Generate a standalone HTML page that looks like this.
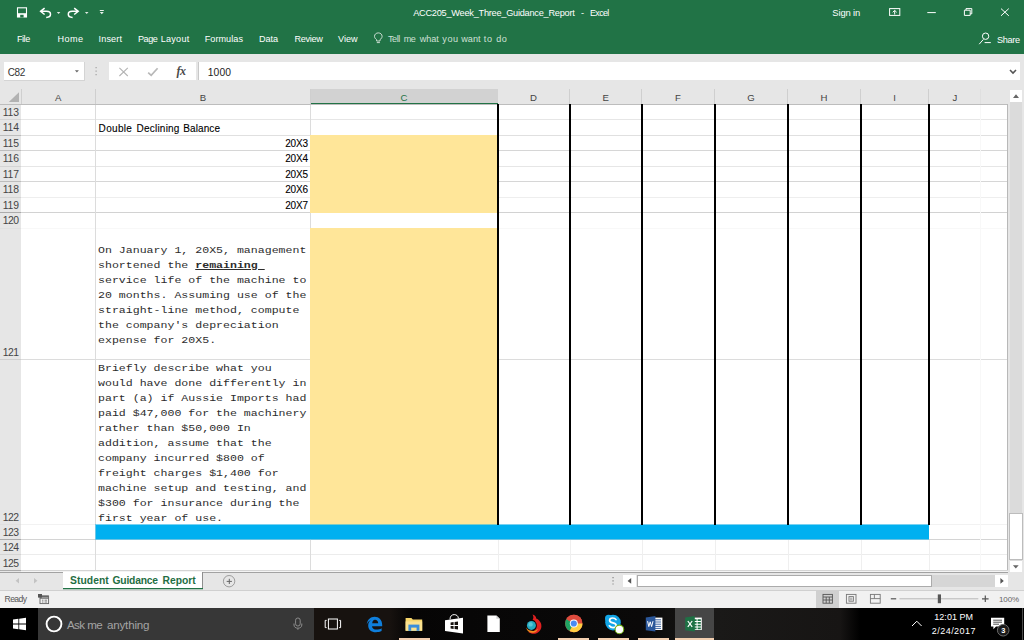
<!DOCTYPE html>
<html>
<head>
<meta charset="utf-8">
<title>ACC205_Week_Three_Guidance_Report - Excel</title>
<style>
html,body{margin:0;padding:0;}
body{width:1024px;height:640px;overflow:hidden;position:relative;background:#fff;font-family:"Liberation Sans",sans-serif;}
.a{position:absolute;}
.t{position:absolute;white-space:nowrap;line-height:20px;}
svg{position:absolute;overflow:visible;}
.mono{position:absolute;font-family:"Liberation Mono",monospace;white-space:pre;}
</style>
</head>
<body>

<!-- ===== title bar + ribbon tabs ===== -->
<div class="a" style="left:0px;top:0px;width:1024px;height:54px;background:#217346;"></div>
<div class="t" style="left:413.20px;top:3px;font-size:9.2px;color:#fff;letter-spacing:-0.244px;">ACC205_Week_Three_Guidance_Report</div>
<div class="t" style="left:580.97px;top:3px;font-size:9.2px;color:#fff;letter-spacing:-0.600px;">-</div>
<div class="t" style="left:590.00px;top:3px;font-size:8.9px;color:#fff;letter-spacing:-0.590px;">Excel</div>
<div class="t" style="left:832.30px;top:3px;font-size:9.4px;color:#fff;letter-spacing:-0.124px;">Sign in</div>
<div class="t" style="left:17.00px;top:29px;font-size:9.1px;color:#fff;letter-spacing:-0.487px;">File</div>
<div class="t" style="left:57.60px;top:29px;font-size:9.1px;color:#fff;letter-spacing:0.374px;">Home</div>
<div class="t" style="left:98.60px;top:29px;font-size:9.1px;color:#fff;letter-spacing:0.128px;">Insert</div>
<div class="t" style="left:138.00px;top:29px;font-size:9.1px;color:#fff;letter-spacing:-0.449px;">Page</div>
<div class="t" style="left:160.80px;top:29px;font-size:9.1px;color:#fff;letter-spacing:0.216px;">Layout</div>
<div class="t" style="left:204.70px;top:29px;font-size:9.1px;color:#fff;letter-spacing:0.053px;">Formulas</div>
<div class="t" style="left:259.00px;top:29px;font-size:9.1px;color:#fff;letter-spacing:-0.076px;">Data</div>
<div class="t" style="left:294.50px;top:29px;font-size:9.1px;color:#fff;letter-spacing:-0.313px;">Review</div>
<div class="t" style="left:338.10px;top:29px;font-size:9.1px;color:#fff;letter-spacing:0.006px;">View</div>
<div class="t" style="left:388.10px;top:29px;font-size:9.1px;color:#cfe0d6;letter-spacing:-0.520px;">Tell</div>
<div class="t" style="left:403.80px;top:29px;font-size:9.1px;color:#cfe0d6;letter-spacing:-0.540px;">me</div>
<div class="t" style="left:419.82px;top:29px;font-size:9.1px;color:#cfe0d6;letter-spacing:-0.046px;">what</div>
<div class="t" style="left:442.30px;top:29px;font-size:9.1px;color:#cfe0d6;letter-spacing:0.565px;">you</div>
<div class="t" style="left:461.22px;top:29px;font-size:9.1px;color:#cfe0d6;letter-spacing:0.021px;">want</div>
<div class="t" style="left:483.81px;top:29px;font-size:9.1px;color:#cfe0d6;letter-spacing:0.600px;">to</div>
<div class="t" style="left:496.19px;top:29px;font-size:9.1px;color:#cfe0d6;letter-spacing:0.600px;">do</div>
<div class="t" style="left:997.00px;top:30px;font-size:9.1px;color:#fff;letter-spacing:-0.320px;">Share</div>
<svg width="1024" height="640" viewBox="0 0 1024 640" style="left:0;top:0;">
<g fill="none" stroke="#fff" stroke-width="1.1">
<!-- save -->
<rect x="17.5" y="7.8" width="9" height="9.2"/>
<path d="M17.5 13.2H26.5V17H17.5Z" fill="#fff" stroke="none"/>
<rect x="20.2" y="14.8" width="3.4" height="2.7" fill="#217346" stroke="none"/>
<!-- undo -->
<path d="M44.6 8.1L40.6 11.3L44.6 14.5" stroke-width="1.5"/>
<path d="M41 11.3H46.6C49.6 11.3 50.5 13.1 50.5 14.3C50.5 16.2 48.8 17.4 46.2 17.4" stroke-width="1.5"/>
<!-- redo -->
<path d="M74.2 8.1L78.2 11.3L74.2 14.5" stroke-width="1.5"/>
<path d="M77.8 11.3H72.2C69.2 11.3 68.3 13.1 68.3 14.3C68.3 16.2 70 17.4 72.6 17.4" stroke-width="1.5"/>
<!-- dropdown arrows -->
<path d="M56.8 12H60.4L58.6 13.9Z" fill="#dfe9e3" stroke="none"/>
<path d="M84.9 12H88.5L86.7 13.9Z" fill="#dfe9e3" stroke="none"/>
<path d="M99.8 10H103.8V11H99.8Z M99.8 12.1H103.8L101.8 14.2Z" fill="#e8f0eb" stroke="none"/>
<!-- ribbon display options -->
<rect x="889.6" y="8.6" width="10.2" height="6.8" stroke-width="1"/>
<path d="M894.7 14.5V10.6 M892.7 12.3L894.7 10.4L896.7 12.3" stroke-width="1"/>
<!-- minimize / restore / close -->
<path d="M927.3 12.6H935.8" stroke-width="1"/>
<path d="M964.4 10.2H970.2V15.4H964.4Z M966 10.2V8.6H971.8V13.8H970.2" stroke-width="1"/>
<path d="M1001 8.6L1008.8 15.8M1008.8 8.6L1001 15.8" stroke-width="1"/>
<!-- light bulb -->
<path d="M376.6 41V39.6C375.4 38.8 374.5 37.7 374.5 36.3C374.5 34.3 376.2 32.9 378.3 32.9C380.4 32.9 382.1 34.3 382.1 36.3C382.1 37.7 381.2 38.8 380 39.6V41Z" stroke="#dbe8e0" stroke-width="0.9"/>
<path d="M376.8 42.6H379.9" stroke="#dbe8e0" stroke-width="0.9"/>
<!-- share person -->
<circle cx="985.6" cy="36.2" r="3.2" stroke-width="1"/>
<path d="M979.2 44.2L983.4 39.4" stroke-width="1"/>
<path d="M984.6 42.6H990.8" stroke-width="1"/>
</g></svg>

<!-- ===== formula bar ===== -->
<div class="a" style="left:0px;top:54px;width:1024px;height:34px;background:#e6e6e6;"></div>
<div class="a" style="left:4px;top:62px;width:80px;height:18px;background:#fff;border-right:1px solid #d4d4d4;border-bottom:1px solid #d4d4d4;"></div>
<div class="t" style="left:7.80px;top:63px;font-size:10px;color:#333;letter-spacing:-0.420px;">C82</div>
<div class="a" style="left:109px;top:62px;width:87px;height:18px;background:#fff;"></div>
<div class="a" style="left:198px;top:62px;width:821px;height:18px;background:#fff;border-left:1px solid #c8c8c8;"></div>
<div class="t" style="left:207.80px;top:63px;font-size:10.3px;color:#222;letter-spacing:0.094px;">1000</div>
<div class="t" style="left:176.40px;top:61px;font-size:12px;color:#4a4a4a;letter-spacing:-0.396px;font-family:'Liberation Serif',serif;font-weight:bold;font-style:italic;">fx</div>
<svg width="1024" height="640" viewBox="0 0 1024 640" style="left:0;top:0;">
<g fill="none" stroke="#b4b4b4" stroke-width="1.2">
<path d="M74.9 70.3H78.9L76.9 72.6Z" fill="#666" stroke="none"/>
<path d="M95.5 67h1.2v1.2h-1.2z M95.5 70.5h1.2v1.2h-1.2z M95.5 74h1.2v1.2h-1.2z" fill="#a2a2a2" stroke="none"/>
<path d="M119.4 67.8L127.8 76M127.8 67.8L119.4 76" stroke-width="1.1"/>
<path d="M148.2 72.6L151.2 75.4L157.6 68.2" stroke-width="1.7" stroke="#b8b8b8"/>
<path d="M1010 70L1013 73L1016 70" stroke="#555" stroke-width="1.6"/>
</g></svg>

<!-- ===== column headers ===== -->
<div class="a" style="left:0px;top:88px;width:1024px;height:16px;background:#e6e6e6;"></div>
<div class="a" style="left:310px;top:89px;width:188px;height:15px;background:#d2d2d2;"></div>
<div class="a" style="left:310px;top:103px;width:188px;height:1.5px;background:#217346;"></div>
<div class="t" style="left:55.00px;top:88px;font-size:9.6px;color:#444;">A</div>
<div class="t" style="left:199.80px;top:88px;font-size:9.6px;color:#444;">B</div>
<div class="t" style="left:400.53px;top:88px;font-size:9.6px;color:#217346;">C</div>
<div class="t" style="left:530.03px;top:88px;font-size:9.6px;color:#444;">D</div>
<div class="t" style="left:602.60px;top:88px;font-size:9.6px;color:#444;">E</div>
<div class="t" style="left:675.07px;top:88px;font-size:9.6px;color:#444;">F</div>
<div class="t" style="left:747.27px;top:88px;font-size:9.6px;color:#444;">G</div>
<div class="t" style="left:820.53px;top:88px;font-size:9.6px;color:#444;">H</div>
<div class="t" style="left:893.17px;top:88px;font-size:9.6px;color:#444;">I</div>
<div class="t" style="left:952.60px;top:88px;font-size:9.6px;color:#444;">J</div>
<div class="a" style="left:21px;top:89px;width:1px;height:15px;background:#cfcfcf;"></div>
<div class="a" style="left:95px;top:89px;width:1px;height:15px;background:#cfcfcf;"></div>
<div class="a" style="left:310px;top:89px;width:1px;height:15px;background:#cfcfcf;"></div>
<div class="a" style="left:569px;top:89px;width:1px;height:15px;background:#cfcfcf;"></div>
<div class="a" style="left:641px;top:89px;width:1px;height:15px;background:#cfcfcf;"></div>
<div class="a" style="left:714px;top:89px;width:1px;height:15px;background:#cfcfcf;"></div>
<div class="a" style="left:787px;top:89px;width:1px;height:15px;background:#cfcfcf;"></div>
<div class="a" style="left:860px;top:89px;width:1px;height:15px;background:#cfcfcf;"></div>
<div class="a" style="left:928px;top:89px;width:1px;height:15px;background:#cfcfcf;"></div>
<div class="a" style="left:980px;top:89px;width:1px;height:15px;background:#dfdfdf;"></div>
<svg width="1024" height="640" viewBox="0 0 1024 640" style="left:0;top:0;">
<path d="M19 92.2V102H8.8Z" fill="#b2b2b2"/></svg>

<!-- ===== grid ===== -->
<div class="a" style="left:21px;top:119.2px;width:987px;height:1px;background:#e6e6e6;"></div>
<div class="a" style="left:21px;top:134.8px;width:987px;height:1px;background:#e0e0e0;"></div>
<div class="a" style="left:21px;top:150.2px;width:987px;height:1px;background:#d6d6d6;"></div>
<div class="a" style="left:21px;top:165.8px;width:987px;height:1px;background:#e6e6e6;"></div>
<div class="a" style="left:21px;top:181px;width:987px;height:1px;background:#d6d6d6;"></div>
<div class="a" style="left:21px;top:196.6px;width:987px;height:1px;background:#eeeeee;"></div>
<div class="a" style="left:21px;top:212px;width:987px;height:1px;background:#d2d2d2;"></div>
<div class="a" style="left:21px;top:227.5px;width:987px;height:1px;background:#f8f8f8;"></div>
<div class="a" style="left:21px;top:359px;width:987px;height:1px;background:#dcdcdc;"></div>
<div class="a" style="left:21px;top:524px;width:987px;height:1px;background:#f2f2f2;"></div>
<div class="a" style="left:21px;top:539.4px;width:987px;height:1px;background:#d4d4d4;"></div>
<div class="a" style="left:21px;top:554.3px;width:987px;height:1px;background:#ececec;"></div>
<div class="a" style="left:95px;top:104px;width:1px;height:468px;background:#dcdcdc;"></div>
<div class="a" style="left:310px;top:104px;width:1px;height:468px;background:#dcdcdc;"></div>
<div class="a" style="left:980px;top:104px;width:1px;height:468px;background:#f8f8f8;"></div>
<div class="a" style="left:497.5px;top:540px;width:1px;height:32px;background:#efefef;"></div>
<div class="a" style="left:569.5px;top:540px;width:1px;height:32px;background:#efefef;"></div>
<div class="a" style="left:641.5px;top:540px;width:1px;height:32px;background:#efefef;"></div>
<div class="a" style="left:714.5px;top:540px;width:1px;height:32px;background:#efefef;"></div>
<div class="a" style="left:787.5px;top:540px;width:1px;height:32px;background:#efefef;"></div>
<div class="a" style="left:860.5px;top:540px;width:1px;height:32px;background:#efefef;"></div>
<div class="a" style="left:928.5px;top:540px;width:1px;height:32px;background:#efefef;"></div>
<div class="a" style="left:310px;top:135px;width:187px;height:78px;background:#ffe699;"></div>
<div class="a" style="left:310px;top:228px;width:187px;height:297px;background:#ffe699;"></div>
<div class="a" style="left:96px;top:524px;width:833px;height:16px;background:rgba(0,176,240,0.5);"></div>
<div class="a" style="left:95px;top:524px;width:1px;height:16px;background:rgba(0,176,240,0.5);"></div>
<div class="a" style="left:96px;top:525px;width:833px;height:14px;background:#00b0f0;"></div>
<div class="a" style="left:0px;top:104px;width:1008px;height:1px;background:#bdbdbd;"></div>
<div class="a" style="left:1007px;top:104px;width:1px;height:468px;background:#b8b8b8;"></div>
<div class="a" style="left:21px;top:570px;width:987px;height:1px;background:#d4d4d4;"></div>
<div class="a" style="left:21px;top:571px;width:987px;height:1px;background:#f4f4f4;"></div>
<div class="a" style="left:0px;top:105px;width:21px;height:467px;background:#e6e6e6;"></div>
<div class="a" style="left:0px;top:119.2px;width:21px;height:1px;background:#d4d4d4;"></div>
<div class="t" style="left:2.80px;top:103px;font-size:10.4px;color:#444;letter-spacing:-0.189px;">113</div>
<div class="a" style="left:0px;top:134.8px;width:21px;height:1px;background:#bdbdbd;"></div>
<div class="t" style="left:2.80px;top:118px;font-size:10.4px;color:#444;letter-spacing:-0.189px;">114</div>
<div class="a" style="left:0px;top:150.2px;width:21px;height:1px;background:#bdbdbd;"></div>
<div class="t" style="left:2.80px;top:134px;font-size:10.4px;color:#444;letter-spacing:-0.189px;">115</div>
<div class="a" style="left:0px;top:165.8px;width:21px;height:1px;background:#d4d4d4;"></div>
<div class="t" style="left:2.80px;top:149px;font-size:10.4px;color:#444;letter-spacing:-0.189px;">116</div>
<div class="a" style="left:0px;top:181px;width:21px;height:1px;background:#bdbdbd;"></div>
<div class="t" style="left:2.80px;top:165px;font-size:10.4px;color:#444;letter-spacing:-0.189px;">117</div>
<div class="a" style="left:0px;top:196.6px;width:21px;height:1px;background:#d4d4d4;"></div>
<div class="t" style="left:2.80px;top:180px;font-size:10.4px;color:#444;letter-spacing:-0.189px;">118</div>
<div class="a" style="left:0px;top:212px;width:21px;height:1px;background:#ababab;"></div>
<div class="t" style="left:2.80px;top:196px;font-size:10.4px;color:#444;letter-spacing:-0.189px;">119</div>
<div class="a" style="left:0px;top:227.5px;width:21px;height:1px;background:#e0e0e0;"></div>
<div class="t" style="left:2.80px;top:211px;font-size:10.4px;color:#444;letter-spacing:-0.574px;">120</div>
<div class="a" style="left:0px;top:359px;width:21px;height:1px;background:#cfcfcf;"></div>
<div class="t" style="left:2.80px;top:343px;font-size:10.4px;color:#444;letter-spacing:-0.574px;">121</div>
<div class="a" style="left:0px;top:524px;width:21px;height:1px;background:#e0e0e0;"></div>
<div class="t" style="left:2.80px;top:508px;font-size:10.4px;color:#444;letter-spacing:-0.574px;">122</div>
<div class="a" style="left:0px;top:539.4px;width:21px;height:1px;background:#ababab;"></div>
<div class="t" style="left:2.80px;top:523px;font-size:10.4px;color:#444;letter-spacing:-0.574px;">123</div>
<div class="a" style="left:0px;top:554.3px;width:21px;height:1px;background:#d4d4d4;"></div>
<div class="t" style="left:2.80px;top:538px;font-size:10.4px;color:#444;letter-spacing:-0.574px;">124</div>
<div class="a" style="left:0px;top:570.4px;width:21px;height:1px;background:#ababab;"></div>
<div class="t" style="left:2.80px;top:554px;font-size:10.4px;color:#444;letter-spacing:-0.574px;">125</div>
<div class="t" style="left:98.60px;top:119px;font-size:10px;color:#000;letter-spacing:0.322px;-webkit-text-stroke:0.1px #000;">Double</div>
<div class="t" style="left:136.60px;top:119px;font-size:10px;color:#000;letter-spacing:0.209px;-webkit-text-stroke:0.1px #000;">Declining</div>
<div class="t" style="left:183.30px;top:119px;font-size:10px;color:#000;letter-spacing:0.093px;-webkit-text-stroke:0.1px #000;">Balance</div>
<div class="t" style="left:285.20px;top:134px;font-size:10px;color:#000;letter-spacing:-0.150px;-webkit-text-stroke:0.1px #000;">20X3</div>
<div class="t" style="left:285.20px;top:149px;font-size:10px;color:#000;letter-spacing:-0.150px;-webkit-text-stroke:0.1px #000;">20X4</div>
<div class="t" style="left:285.20px;top:165px;font-size:10px;color:#000;letter-spacing:-0.150px;-webkit-text-stroke:0.1px #000;">20X5</div>
<div class="t" style="left:285.20px;top:180px;font-size:10px;color:#000;letter-spacing:-0.150px;-webkit-text-stroke:0.1px #000;">20X6</div>
<div class="t" style="left:285.20px;top:196px;font-size:10px;color:#000;letter-spacing:-0.150px;-webkit-text-stroke:0.1px #000;">20X7</div>
<div class="t mono" style="left:98.3px;top:241px;font-size:9.7px;transform:scaleX(1.1948);transform-origin:0 0;color:#2c2c2c;">On January 1, 20X5, management</div>
<div class="t mono" style="left:98.3px;top:256px;font-size:9.7px;transform:scaleX(1.1948);transform-origin:0 0;color:#2c2c2c;">shortened the <b><u>remaining </u></b></div>
<div class="t mono" style="left:98.3px;top:271px;font-size:9.7px;transform:scaleX(1.1948);transform-origin:0 0;color:#2c2c2c;">service life of the machine to</div>
<div class="t mono" style="left:98.3px;top:286px;font-size:9.7px;transform:scaleX(1.1948);transform-origin:0 0;color:#2c2c2c;">20 months. Assuming use of the</div>
<div class="t mono" style="left:98.3px;top:301px;font-size:9.7px;transform:scaleX(1.1948);transform-origin:0 0;color:#2c2c2c;">straight-line method, compute</div>
<div class="t mono" style="left:98.3px;top:316px;font-size:9.7px;transform:scaleX(1.1948);transform-origin:0 0;color:#2c2c2c;">the company's depreciation</div>
<div class="t mono" style="left:98.3px;top:331px;font-size:9.7px;transform:scaleX(1.1948);transform-origin:0 0;color:#2c2c2c;">expense for 20X5.</div>
<div class="t mono" style="left:98.3px;top:359px;font-size:9.7px;transform:scaleX(1.1948);transform-origin:0 0;color:#2c2c2c;">Briefly describe what you</div>
<div class="t mono" style="left:98.3px;top:374px;font-size:9.7px;transform:scaleX(1.1948);transform-origin:0 0;color:#2c2c2c;">would have done differently in</div>
<div class="t mono" style="left:98.3px;top:389px;font-size:9.7px;transform:scaleX(1.1948);transform-origin:0 0;color:#2c2c2c;">part (a) if Aussie Imports had</div>
<div class="t mono" style="left:98.3px;top:404px;font-size:9.7px;transform:scaleX(1.1948);transform-origin:0 0;color:#2c2c2c;">paid $47,000 for the machinery</div>
<div class="t mono" style="left:98.3px;top:419px;font-size:9.7px;transform:scaleX(1.1948);transform-origin:0 0;color:#2c2c2c;">rather than $50,000 In</div>
<div class="t mono" style="left:98.3px;top:434px;font-size:9.7px;transform:scaleX(1.1948);transform-origin:0 0;color:#2c2c2c;">addition, assume that the</div>
<div class="t mono" style="left:98.3px;top:449px;font-size:9.7px;transform:scaleX(1.1948);transform-origin:0 0;color:#2c2c2c;">company incurred $800 of</div>
<div class="t mono" style="left:98.3px;top:464px;font-size:9.7px;transform:scaleX(1.1948);transform-origin:0 0;color:#2c2c2c;">freight charges $1,400 for</div>
<div class="t mono" style="left:98.3px;top:479px;font-size:9.7px;transform:scaleX(1.1948);transform-origin:0 0;color:#2c2c2c;">machine setup and testing, and</div>
<div class="t mono" style="left:98.3px;top:494px;font-size:9.7px;transform:scaleX(1.1948);transform-origin:0 0;color:#2c2c2c;">$300 for insurance during the</div>
<div class="t mono" style="left:98.3px;top:509px;font-size:9.7px;transform:scaleX(1.1948);transform-origin:0 0;color:#2c2c2c;">first year of use.</div>
<div class="a" style="left:497.2px;top:104px;width:2px;height:420.5px;background:#000;"></div>
<div class="a" style="left:569.3px;top:104px;width:2px;height:420.5px;background:#000;"></div>
<div class="a" style="left:641.2px;top:104px;width:2px;height:420.5px;background:#000;"></div>
<div class="a" style="left:714px;top:104px;width:2px;height:420.5px;background:#000;"></div>
<div class="a" style="left:787px;top:104px;width:2px;height:420.5px;background:#000;"></div>
<div class="a" style="left:860px;top:104px;width:2px;height:420.5px;background:#000;"></div>
<div class="a" style="left:928px;top:104px;width:2px;height:420.5px;background:#000;"></div>

<!-- ===== vertical scrollbar ===== -->
<div class="a" style="left:1008px;top:88px;width:16px;height:484px;background:#e6e6e6;"></div>
<div class="a" style="left:1009.5px;top:102px;width:12.5px;height:459px;background:#dbdbdb;"></div>
<div class="a" style="left:1009.5px;top:89.6px;width:12.8px;height:12.8px;background:#fff;"></div>
<div class="a" style="left:1009px;top:513px;width:13.5px;height:46.5px;background:#fff;box-sizing:border-box;border:1px solid #bcbcbc;"></div>
<div class="a" style="left:1009.5px;top:560.6px;width:12.8px;height:12px;background:#fff;"></div>
<svg width="1024" height="640" viewBox="0 0 1024 640" style="left:0;top:0;">
<path d="M1013 98L1016 94.2L1019 98Z M1012.9 565.2H1018.7L1015.8 568.6Z" fill="#666"/></svg>

<!-- ===== sheet tabs + horizontal scrollbar ===== -->
<div class="a" style="left:0px;top:572px;width:1024px;height:18px;background:#e6e6e6;"></div>
<div class="a" style="left:0px;top:572px;width:1008px;height:1px;background:#a2a2a2;"></div>
<div class="a" style="left:63px;top:572px;width:139px;height:17px;background:#fff;border-right:1px solid #8e8e8e;"></div>
<div class="a" style="left:63px;top:588px;width:140px;height:1px;background:#217346;"></div>
<div class="a" style="left:63px;top:589px;width:140px;height:1px;background:rgba(33,115,70,0.25);"></div>
<div class="t" style="left:70.00px;top:571px;font-size:10.3px;color:#1f6e43;letter-spacing:0.077px;font-weight:bold;">Student</div>
<div class="t" style="left:112.50px;top:571px;font-size:10.3px;color:#1f6e43;letter-spacing:-0.205px;font-weight:bold;">Guidance</div>
<div class="t" style="left:162.50px;top:571px;font-size:10.3px;color:#1f6e43;letter-spacing:0.023px;font-weight:bold;">Report</div>
<div class="a" style="left:623px;top:574.7px;width:12.5px;height:12.5px;background:#fff;"></div>
<div class="a" style="left:636.5px;top:574.7px;width:295px;height:12.5px;background:#fff;box-sizing:border-box;border:1px solid #ababab;"></div>
<div class="a" style="left:931.5px;top:574.7px;width:63.5px;height:12.5px;background:#d6d6d6;"></div>
<div class="a" style="left:995.4px;top:574.7px;width:12.6px;height:12.5px;background:#fff;"></div>
<svg width="1024" height="640" viewBox="0 0 1024 640" style="left:0;top:0;">
<path d="M19 578L15.6 580.8L19 583.6Z M34 578L37.4 580.8L34 583.6Z" fill="#c3c3c3"/>
<circle cx="229.1" cy="581.2" r="5.7" fill="none" stroke="#8a8a8a" stroke-width="0.8"/>
<path d="M226.7 581.4H231.9M229.3 578.8V584" stroke="#666" stroke-width="1"/>
<path d="M612.4 577h1.3v1.2h-1.3z M612.4 580.2h1.3v1.2h-1.3z M612.4 583.4h1.3v1.2h-1.3z" fill="#8c8c8c"/>
<path d="M631.2 578L627.6 580.9L631.2 583.8Z M1000.4 578L1003.8 580.9L1000.4 583.8Z" fill="#555"/>
</svg>

<!-- ===== status bar ===== -->
<div class="a" style="left:0px;top:590px;width:1024px;height:18px;background:#f1f1f1;"></div>
<div class="a" style="left:0px;top:590px;width:1024px;height:1px;background:#d0d0d0;"></div>
<div class="t" style="left:4.57px;top:589px;font-size:8.6px;color:#555;letter-spacing:-0.600px;">Ready</div>
<div class="a" style="left:815.8px;top:590.5px;width:23.2px;height:17.5px;background:#d0d0d0;"></div>
<div class="t" style="left:999.00px;top:590px;font-size:8px;color:#666;letter-spacing:-0.088px;">100%</div>
<svg width="1024" height="640" viewBox="0 0 1024 640" style="left:0;top:0;">
<g fill="none" stroke="#666" stroke-width="0.9">
<!-- macro record icon -->
<rect x="40" y="596" width="8.6" height="7.6"/>
<rect x="40" y="595.6" width="8.6" height="2" fill="#666" stroke="none"/>
<path d="M40 598.4H48.6 M42 600.2H43.4M44.6 600.2H47 M42 602H43.4M44.6 602H47" stroke-width="0.8"/>
<rect x="38" y="594" width="4" height="3.6" fill="#555" stroke="none"/>
<!-- normal view -->
<rect x="823" y="594.4" width="9.4" height="8.8" stroke="#555"/>
<path d="M823 597H832.4M823 600H832.4M826.2 597V603.2M829.3 597V603.2" stroke="#555"/>
<!-- page layout -->
<rect x="846.4" y="594.4" width="9.6" height="8.8" stroke="#777"/>
<rect x="849" y="596.6" width="4.4" height="4.6" stroke="#777"/>
<path d="M850 598.2H852.4M850 599.8H852.4" stroke="#777" stroke-width="0.7"/>
<!-- page break -->
<rect x="870.4" y="594.4" width="9.8" height="8.8" stroke="#777"/>
<path d="M870.4 598.6H880.2M874.4 594.4V598.6" stroke="#777"/>
<!-- zoom slider -->
<path d="M890.8 598.8H896.2" stroke="#555" stroke-width="1.2"/>
<path d="M899.5 598.8H978.3" stroke="#b0b0b0" stroke-width="0.9"/>
<rect x="937.8" y="594.4" width="3.2" height="8.8" fill="#555" stroke="none"/>
<path d="M982 598.8H988.6M985.3 595.5V602.1" stroke="#555" stroke-width="1.2"/>
</g></svg>

<!-- ===== windows taskbar ===== -->
<div class="a" style="left:0px;top:608px;width:1024px;height:32px;background:linear-gradient(90deg,#17120f 0,#17120f 390px,#060505 410px,#0a0909 640px,#1a1918 716px,#171514 840px,#000 860px);"></div>
<div class="a" style="left:0px;top:608px;width:38px;height:32px;background:#000;"></div>
<div class="a" style="left:38px;top:608px;width:276px;height:32px;background:#373737;"></div>
<div class="a" style="left:675px;top:608px;width:39px;height:32px;background:#464646;"></div>
<div class="a" style="left:398.5px;top:638px;width:31.30000000000001px;height:2px;background:#f3cfb0;"></div>
<div class="a" style="left:558.3px;top:638px;width:31.200000000000045px;height:2px;background:#f3cfb0;"></div>
<div class="a" style="left:598.3px;top:638px;width:31.200000000000045px;height:2px;background:#f3cfb0;"></div>
<div class="a" style="left:638.3px;top:638px;width:31.200000000000045px;height:2px;background:#f3cfb0;"></div>
<div class="a" style="left:675px;top:638px;width:39px;height:2px;background:#f3cfb0;"></div>
<div class="a" style="left:1021.5px;top:608px;width:1px;height:32px;background:#4a4a4a;"></div>
<div class="t" style="left:66.97px;top:615px;font-size:11.6px;color:#a4a4a4;letter-spacing:-0.600px;">Ask</div>
<div class="t" style="left:87.24px;top:615px;font-size:11.6px;color:#a4a4a4;letter-spacing:-0.600px;">me</div>
<div class="t" style="left:107.00px;top:615px;font-size:11.6px;color:#a4a4a4;letter-spacing:-0.194px;">anything</div>
<div class="t" style="left:934.30px;top:607px;font-size:9px;color:#fff;letter-spacing:0.026px;">12:01 PM</div>
<div class="t" style="left:931.80px;top:621px;font-size:9px;color:#fff;letter-spacing:0.457px;">2/24/2017</div>
<svg width="1024" height="640" viewBox="0 0 1024 640" style="left:0;top:0;">

<!-- windows logo -->
<path d="M13 619.6L18.4 618.8V623.6H13Z M19.2 618.7L26 617.7V623.6H19.2Z M13 624.4H18.4V629.2L13 628.4Z M19.2 624.4H26V630.3L19.2 629.3Z" fill="#fff"/>
<!-- cortana ring -->
<circle cx="54" cy="624" r="7.4" fill="none" stroke="#fff" stroke-width="1.9"/>
<!-- microphone -->
<g fill="none" stroke="#8c8c8c" stroke-width="1">
<rect x="295.6" y="618" width="4.6" height="8" rx="2.2"/>
<path d="M294 623.5V625C294 627 295.6 628.2 297.9 628.2C300.2 628.2 301.8 627 301.8 625V623.5 M297.9 628.2V629.8"/>
</g>
<!-- task view -->
<g fill="none" stroke="#fff" stroke-width="1">
<rect x="328.4" y="619" width="9" height="10"/>
<path d="M326.6 620.4H325.2V627.6H326.6 M339.2 620.4H340.6V627.6H339.2"/>
</g>
<!-- edge -->
<path d="M366.8 624.6C367 620 370.4 616.8 374.6 616.8C379 616.8 382.2 620 382.2 625V626.2H372C372.2 628.4 374 629.6 376.6 629.6C378.4 629.6 380 629.2 381.6 628.2V631C380 631.8 378.2 632.2 376 632.2C371.2 632.2 368.2 629.4 368.2 625.4C368.2 623.2 369.2 621.2 371 620C369 620.6 367.4 622.4 366.8 624.6Z M372.2 623.2H378.2C378.2 621 376.8 619.8 375 619.8C373.4 619.8 372.4 621.2 372.2 623.2Z" fill="#0f7fdc" fill-rule="evenodd"/>
<!-- file explorer -->
<path d="M405.6 618H411.4L412.8 619.6H422.2V630.8H405.6Z" fill="#f7d66b"/>
<path d="M405.6 621.4H422.2V630.8H405.6Z" fill="#fbe28f"/>
<path d="M408.4 624.6H419.4V630.8H408.4Z" fill="#3a8edb"/>
<path d="M411.2 627.6H416.6V630.8H411.2Z" fill="#fbe28f"/>
<!-- store -->
<path d="M445 620.2L463 617.8V633.4L445 631Z" fill="#fff"/>
<path d="M450 619.4C450 616 452 614.6 454.2 614.6C456.4 614.6 458.4 616 458.4 618.4" fill="none" stroke="#fff" stroke-width="1"/>
<path d="M450.6 622.4L453.6 622V625H450.6Z M454.6 621.9L458 621.4V625H454.6Z M450.6 626H453.6V629L450.6 628.6Z M454.6 626H458V629.6L454.6 629.1Z" fill="#15110e"/>
<!-- blank document -->
<path d="M487.4 615.4H496.4L499.8 618.8V632H487.4Z" fill="#fff"/>
<path d="M496.4 615.4V618.8H499.8Z" fill="#cfcfcf"/>
<!-- torch browser -->
<path d="M532.4 614.4C534.6 615 536.4 616.4 536.2 618.6C539.4 620 541.6 623 541.4 626.4C541.2 630.4 538 633.6 533.6 633.8C531.6 633.8 529.8 633.2 528.4 632C532.6 632.6 536.6 630.2 536.8 626C537 622.8 535 620.6 532.6 619.8C533.8 618 533.6 616 532.4 614.4Z" fill="#e02020"/>
<path d="M526.2 627.4C526.8 631 530 633.2 533.6 632.8C536 632.4 537.6 630.8 538 628.6C536.6 630.8 533.4 631.6 530.6 630.6C528.6 630 527 628.8 526.2 627.4Z" fill="#f28c1e"/>
<circle cx="531.4" cy="625.4" r="4.5" fill="#25a9c0"/>
<circle cx="530.6" cy="624.4" r="2.2" fill="#59c6d6"/>
<!-- chrome -->
<circle cx="573.8" cy="623.5" r="8.7" fill="#dd4b3e"/>
<path d="M573.8 623.5L566.3 619.1A8.7 8.7 0 0 0 569.6 631.1Z" fill="#1fa463"/>
<path d="M573.8 623.5L569.6 631.1A8.7 8.7 0 0 0 582.5 623.5Z" fill="#ffce43"/>
<path d="M573.8 623.5L566.3 619.1A8.7 8.7 0 0 1 582 620.5H573.8Z" fill="#dd4b3e"/>
<circle cx="573.8" cy="623.5" r="4" fill="#fff"/>
<circle cx="573.8" cy="623.5" r="3.1" fill="#4a8af4"/>
<!-- skype -->
<circle cx="613" cy="622.6" r="7.8" fill="#12a5e6"/>
<circle cx="608.6" cy="618.4" r="3.6" fill="#12a5e6"/>
<circle cx="617.4" cy="626.8" r="3.6" fill="#12a5e6"/>
<path d="M616 619.6C615.2 618.4 613.8 618 612.6 618C610.8 618 609.6 619 609.6 620.4C609.6 623.6 616.2 622 616.2 625.2C616.2 626.6 614.8 627.6 613 627.6C611.4 627.6 610.2 627 609.4 625.8" fill="none" stroke="#fff" stroke-width="1.7" stroke-linecap="round"/>
<circle cx="619.4" cy="629.4" r="4.3" fill="#fff" stroke="#6fae12" stroke-width="1.1"/>
<!-- word -->
<path d="M652 617.6H662.4V630H652Z" fill="#fff"/>
<path d="M654 619.8H661M654 622H661M654 624.2H661M654 626.4H661M654 628.4H661" stroke="#2b579a" stroke-width="0.9"/>
<path d="M645.8 617.4L655.4 616V631.6L645.8 630.2Z" fill="#2b579a"/>
<path d="M647.6 621.2L648.8 626.6L650.2 621.8L651.6 626.6L653 621.2" fill="none" stroke="#fff" stroke-width="1"/>
<!-- excel -->
<path d="M691.4 617.6H701.8V630H691.4Z" fill="#fff"/>
<path d="M693.6 619.2H696.6V621H693.6Z M697.6 619.2H700.8V621H697.6Z M693.6 622H696.6V623.8H693.6Z M697.6 622H700.8V623.8H697.6Z M693.6 624.8H696.6V626.6H693.6Z M697.6 624.8H700.8V626.6H697.6Z M693.6 627.6H696.6V629.2H693.6Z M697.6 627.6H700.8V629.2H697.6Z" fill="#1e7145"/>
<path d="M685.2 617.4L694.8 616V631.6L685.2 630.2Z" fill="#1e7145"/>
<path d="M687.8 621L692.2 626.8M692.2 621L687.8 626.8" stroke="#fff" stroke-width="1.2"/>
<!-- tray caret -->
<path d="M912 626L916.8 621.2L921.6 626" fill="none" stroke="#fff" stroke-width="1"/>
<!-- action centre -->
<path d="M991 617.8H1004.2V626.6H996L993.4 629.2V626.6H991Z" fill="#fff"/>
<path d="M993.2 620.2H1002M993.2 622.2H1002M993.2 624.2H999" stroke="#222" stroke-width="0.8"/>
<circle cx="1003.2" cy="630.2" r="5.8" fill="#1b1b1b" stroke="#6a6a6a" stroke-width="1"/>
</svg>
<div class="t" style="left:1001.14px;top:621px;font-size:7.4px;color:#fff;font-weight:bold;">3</div>
</body>
</html>
